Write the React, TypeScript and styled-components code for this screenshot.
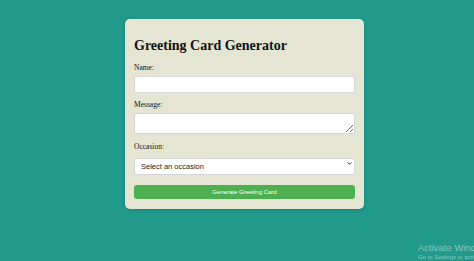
import styled, { createGlobalStyle } from "styled-components";

const GlobalStyle = createGlobalStyle`
  html, body {
    margin: 0;
    padding: 0;
    width: 474px;
    height: 261px;
    overflow: hidden;
    background-color: #219a8b;
  }
`;

const Page = styled.div`
  position: relative;
  width: 474px;
  height: 261px;
  padding: 19px 0 0 125px;
  box-sizing: border-box;
  overflow: hidden;
`;

const Card = styled.form`
  width: 239px;
  height: 190px;
  box-sizing: border-box;
  padding: 16px 9px 10px 9px;
  background-color: #e5e5d3;
  border-radius: 5px;
  box-shadow: 0 1px 4px rgba(0, 0, 0, 0.15);
  display: flex;
  flex-direction: column;
  font-family: "Liberation Serif", serif;
  color: #111;
`;

const Title = styled.h1`
  margin: 0 0 6px 0;
  font-size: 14px;
  line-height: 22px;
  font-weight: bold;
`;

const Label = styled.label`
  font-size: 7.5px;
  line-height: 10px;
  margin-bottom: 3px;
`;

const Input = styled.input`
  height: 17px;
  box-sizing: border-box;
  border: 1px solid #d6d6d6;
  border-radius: 2px;
  background: #fff;
  margin: 0 0 7px 0;
`;

const TextArea = styled.textarea`
  height: 23px;
  box-sizing: border-box;
  border: 1px solid #d6d6d6;
  border-radius: 2px;
  background: #fff;
  resize: vertical;
  margin: 0 0 8px 0;
  padding: 2px;
`;

const SelectWrap = styled.div`
  position: relative;
  margin: 0 0 10px 0;
`;

const Select = styled.select`
  width: 100%;
  height: 17px;
  box-sizing: border-box;
  border: 1px solid #d6d6d6;
  border-radius: 2px;
  background: #fff;
  font-family: "Liberation Sans", Arial, sans-serif;
  font-size: 7.5px;
  color: #222;
  padding: 0 6px;
  appearance: none;
  -webkit-appearance: none;
`;

const Chevron = styled.svg`
  position: absolute;
  right: 3px;
  top: 6px;
  width: 5px;
  height: 5px;
  pointer-events: none;
`;

const Button = styled.button`
  height: 15px;
  border: none;
  border-radius: 3px;
  background-color: #4caf50;
  color: #fff;
  font-family: "Liberation Sans", Arial, sans-serif;
  font-size: 6px;
  padding: 0;
  cursor: pointer;
`;

const Watermark = styled.div`
  position: absolute;
  left: 418px;
  top: 242px;
  white-space: nowrap;
  font-family: "Liberation Sans", Arial, sans-serif;
  color: rgba(255, 255, 255, 0.45);
`;

const WatermarkTitle = styled.div`
  font-size: 9.5px;
  line-height: 11px;
`;

const WatermarkSub = styled.div`
  font-size: 6px;
  line-height: 8px;
`;

export default function App() {
  return (
    <>
      <GlobalStyle />
      <Page>
        <Card onSubmit={(e) => e.preventDefault()}>
          <Title>Greeting Card Generator</Title>
          <Label>Name:</Label>
          <Input type="text" />
          <Label>Message:</Label>
          <TextArea />
          <Label>Occasion:</Label>
          <SelectWrap>
            <Select defaultValue="">
              <option value="">Select an occasion</option>
              <option value="birthday">Birthday</option>
              <option value="anniversary">Anniversary</option>
              <option value="holiday">Holiday</option>
            </Select>
            <Chevron viewBox="0 0 10 10">
              <path d="M1.5 3 L5 6.5 L8.5 3" fill="none" stroke="#222" strokeWidth="2" />
            </Chevron>
          </SelectWrap>
          <Button type="submit">Generate Greeting Card</Button>
        </Card>
        <Watermark>
          <WatermarkTitle>Activate Windows</WatermarkTitle>
          <WatermarkSub>Go to Settings to activate Windows.</WatermarkSub>
        </Watermark>
      </Page>
    </>
  );
}
